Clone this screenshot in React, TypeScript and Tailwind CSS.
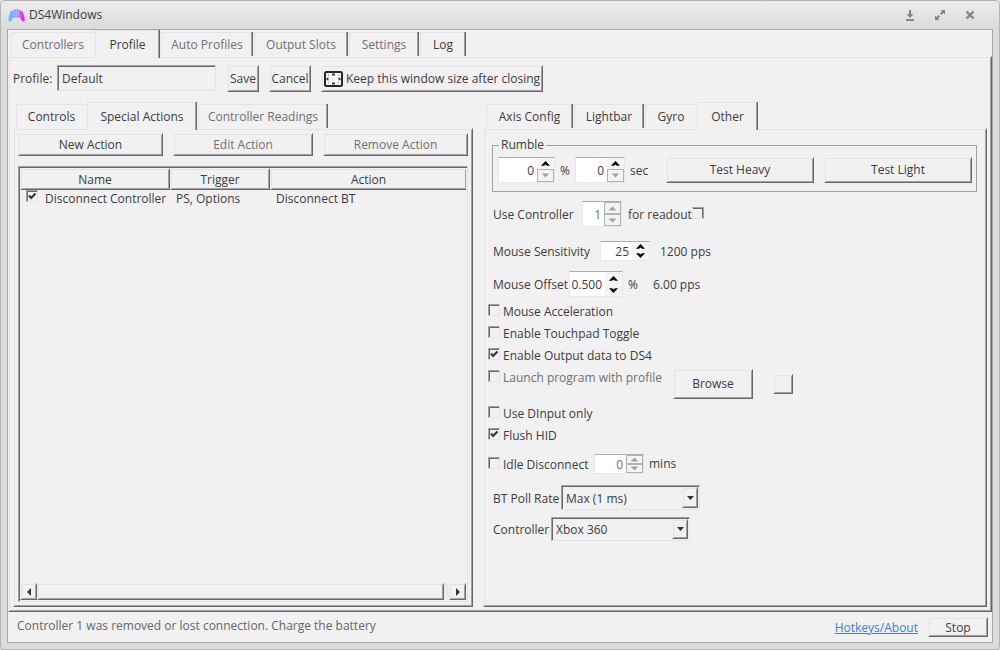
import { useState } from 'react';
import type { ButtonHTMLAttributes, ReactNode } from 'react';
import { clsx } from 'clsx';

const raised =
  'border border-t-[#f1f1f1] border-l-[#f1f1f1] border-r-[#696969] border-b-[#696969] shadow-[inset_1px_1px_0_#e3e3e3,inset_-1px_-1px_0_#a0a0a0]';
const sunken =
  'border border-t-[#a0a0a0] border-l-[#a0a0a0] border-r-[#e3e3e3] border-b-[#e3e3e3] shadow-[inset_1px_1px_0_#696969]';

function PadLogo() {
  return (
    <svg width="17" height="13" viewBox="0 0 17 13" className="shrink-0" aria-hidden="true">
      <defs>
        <linearGradient id="pad" x1="0" x2="1" y1="0" y2="0">
          <stop offset="0" stopColor="#55c8ff" />
          <stop offset="0.35" stopColor="#86a6fa" />
          <stop offset="0.65" stopColor="#a878f2" />
          <stop offset="0.85" stopColor="#ee2ff5" />
          <stop offset="1" stopColor="#ff0af5" />
        </linearGradient>
      </defs>
      <path
        d="M2.500 2.500C3 1.500 4.500 1.500 5.500 1.500L6 .5h5l.5 1c1 0 2.500 0 3 1L16 6.500l.7 4c.2 2-2.200 2.500-3.200 1.200L12 8.500H5L3.500 11.700C2.500 13 .1 12.500.3 10.500l.7-4z"
        fill="url(#pad)"
      />
      <path d="M6.500 1v7M8.500 1v7M10.500 1v7M5.500 3.500h6M5.500 6h6" stroke="#b4c2fb" strokeWidth="0.600" fill="none" />
    </svg>
  );
}

function ResizeIcon() {
  return (
    <svg width="19" height="16" viewBox="0 0 19 16" className="shrink-0" aria-hidden="true">
      <rect x="1" y="1" width="17" height="14" rx="1.500" fill="#f6f6f6" stroke="#262626" strokeWidth="2" />
      <path
        d="M8 4.500h3v-2H8zM8 11.500h3v2H8zM4.500 6.500v3L2.500 9V7zM14.500 6.500v3l2-.5V7z"
        fill="#3c3c3c"
      />
      <path d="M4 4h1v1H4zM14 4h1v1h-1zM4 11h1v1H4zM14 11h1v1h-1z" fill="#8a8a8a" />
    </svg>
  );
}

type ButtonProps = ButtonHTMLAttributes<HTMLButtonElement>;

function Button({ className, children, ...rest }: ButtonProps) {
  return (
    <button type="button" className={clsx(raised, 'whitespace-nowrap disabled:text-[#707070]', className)} {...rest}>
      {children}
    </button>
  );
}

// openEnd marks the tab whose right edge is hidden by the selected one
type TabItem = { label: string; width: string; muted?: boolean; openEnd?: boolean };

function Tabs({ items, active, onChange, className }: {
  items: TabItem[];
  active: string;
  onChange: (label: string) => void;
  className?: string;
}) {
  return (
    <div role="tablist" className={clsx('flex h-[26px] items-start', className)}>
      {items.map((item) => {
        const on = item.label === active;
        return (
          <button
            key={item.label}
            type="button"
            role="tab"
            aria-selected={on}
            onClick={() => onChange(item.label)}
            className={clsx(
              'shrink-0 whitespace-nowrap pt-[2px] pl-[2px]',
              on && 'relative h-7 bg-[#f1f1f1]',
              !on && 'mt-[2px] h-[24px]',
              item.openEnd && !on
                ? 'shadow-[inset_1px_0_0_#f1f1f1,inset_2px_1px_0_#e3e3e3]'
                : 'border-r border-r-[#696969] shadow-[inset_-1px_0_0_#a0a0a0,inset_1px_0_0_#f1f1f1,inset_2px_1px_0_#e3e3e3]',
              item.muted && !on && 'text-[#707070]',
              item.width,
            )}
          >
            {item.label}
          </button>
        );
      })}
    </div>
  );
}

function CheckBox({ id, defaultChecked, disabled, mirrored, label }: {
  id: string;
  defaultChecked?: boolean;
  disabled?: boolean;
  mirrored?: boolean;
  label?: string;
}) {
  return (
    <span className="relative block size-3 shrink-0">
      <input
        id={id}
        type="checkbox"
        aria-label={label}
        defaultChecked={defaultChecked}
        disabled={disabled}
        className={clsx('peer block size-3 appearance-none', sunken, mirrored && '-scale-x-100')}
      />
      <svg
        className="pointer-events-none absolute inset-0 hidden peer-checked:block"
        width="12"
        height="12"
        viewBox="0 0 12 12"
        aria-hidden="true"
      >
        <path d="M3 5.500 5.200 8 9.500 3.500" fill="none" stroke="#333" strokeWidth="2" />
      </svg>
    </span>
  );
}

function CheckRow({ id, children, defaultChecked, disabled, className }: {
  id: string;
  children: ReactNode;
  defaultChecked?: boolean;
  disabled?: boolean;
  className?: string;
}) {
  return (
    <div className={clsx('flex h-[22px] items-start gap-[3px] pt-[3px]', className)}>
      <CheckBox id={id} defaultChecked={defaultChecked} disabled={disabled} />
      <label htmlFor={id} className={clsx('whitespace-nowrap', disabled && 'text-[#707070]')}>
        {children}
      </label>
    </div>
  );
}

function SpinButton({ up, disabled, onClick }: { up?: boolean; disabled?: boolean; onClick: () => void }) {
  return (
    <button
      type="button"
      aria-label={up ? 'Increase' : 'Decrease'}
      disabled={disabled}
      onClick={onClick}
      className="flex min-h-0 flex-1 items-center justify-center bg-[#f4f4f4] disabled:border disabled:border-[#adb2b5]"
    >
      <svg width="9" height="5" viewBox="0 0 9 5" className={up ? '' : 'rotate-180'} aria-hidden="true">
        {disabled ? (
          <path d="M0.500 4.500 4.500 0.500l4 4z" fill="#a3a3a3" />
        ) : (
          <path d="M0 4.800 4.500 0 9 4.800H6L4.500 3.500 3 4.800z" fill="#000" />
        )}
      </svg>
    </button>
  );
}

function Spinner({ id, label, value, step = 1, digits = 0, disabled, downDisabled, className }: {
  id: string;
  label?: string;
  value: number;
  step?: number;
  digits?: number;
  disabled?: boolean;
  downDisabled?: boolean;
  className?: string;
}) {
  const [text, setText] = useState(value.toFixed(digits));
  const bump = (by: number) => setText(Math.max(0, Number(text) + by).toFixed(digits));

  return (
    <span
      className={clsx(
        'flex shrink-0 border border-[#e3e9ef] border-t-[#abadb3] bg-white',
        className,
      )}
    >
      <input
        id={id}
        aria-label={label}
        inputMode="decimal"
        value={text}
        disabled={disabled}
        onChange={(e) => setText(e.target.value)}
        className="w-0 min-w-0 flex-1 bg-white pt-[1px] pr-[3px] text-right outline-none disabled:text-[#707070]"
      />
      <span className="flex w-[17px] flex-col">
        <SpinButton up disabled={disabled} onClick={() => bump(step)} />
        <SpinButton disabled={disabled || (downDisabled && Number(text) <= 0)} onClick={() => bump(-step)} />
      </span>
    </span>
  );
}

function Select({ id, options, className }: { id: string; options: string[]; className?: string }) {
  return (
    <span className={clsx('relative block shrink-0 leading-4', className)}>
      <select id={id} className={clsx('size-full appearance-none pt-[2px] pl-1 outline-none', sunken)}>
        {options.map((o) => (
          <option key={o}>{o}</option>
        ))}
      </select>
      <span
        className={clsx(
          'pointer-events-none absolute inset-y-[2px] right-[2px] flex w-4 items-center justify-center bg-[#f1f1f1]',
          raised,
        )}
      >
        <svg width="7" height="4" viewBox="0 0 7 4" aria-hidden="true">
          <path d="M0 0h7L3.500 4z" fill="#333" />
        </svg>
      </span>
    </span>
  );
}

function TitleBar() {
  return (
    <header className="flex h-7 shrink-0 items-center justify-between pl-[1px] pr-[17px]">
      <div className="flex items-center gap-1">
        <PadLogo />
        <h1>DS4Windows</h1>
      </div>
      <div className="flex items-center gap-[19px] text-[#858585]">
        <button type="button" aria-label="Minimize">
          <svg width="11" height="11" viewBox="0 0 11 11" fill="currentColor" aria-hidden="true">
            <path d="M4 0h2v4h2.500L5 8 1.500 4H4zM1 9h8v2H1z" />
          </svg>
        </button>
        <button type="button" aria-label="Maximize">
          <svg width="11" height="11" viewBox="0 0 11 11" fill="currentColor" aria-hidden="true">
            <path d="M5.500 0H10v4.500L8.500 3 6.500 5 5 3.500l2-2zM0 5.500 1.500 7l2-2L5 6.500l-2 2L4.500 10H0z" />
          </svg>
        </button>
        <button type="button" aria-label="Close">
          <svg width="11" height="11" viewBox="0 0 11 11" aria-hidden="true">
            <path d="m1.500 1.500 7 7M8.500 1.500l-7 7" stroke="currentColor" strokeWidth="2.400" />
          </svg>
        </button>
      </div>
    </header>
  );
}

const mainTabs: TabItem[] = [
  { label: 'Controllers', width: 'w-[84px]', muted: true, openEnd: true },
  { label: 'Profile', width: 'w-[66px]' },
  { label: 'Auto Profiles', width: 'w-[93px]', muted: true },
  { label: 'Output Slots', width: 'w-[95px]', muted: true },
  { label: 'Settings', width: 'w-[71px]', muted: true },
  { label: 'Log', width: 'w-[47px]' },
];

const actionTabs: TabItem[] = [
  { label: 'Controls', width: 'w-[71px]', openEnd: true },
  { label: 'Special Actions', width: 'w-[111px]' },
  { label: 'Controller Readings', width: 'w-[131px]', muted: true },
];

const optionTabs: TabItem[] = [
  { label: 'Axis Config', width: 'w-[88px]' },
  { label: 'Lightbar', width: 'w-[71px]' },
  { label: 'Gyro', width: 'w-[52px]', openEnd: true },
  { label: 'Other', width: 'w-[62px]' },
];

const actions = [{ name: 'Disconnect Controller', trigger: 'PS, Options', action: 'Disconnect BT' }];

function ActionList() {
  return (
    <div className={clsx('mt-[10px] flex flex-1 flex-col p-[1px]', sunken)}>
      <table className="w-full table-fixed border-separate border-spacing-0">
        <thead>
          <tr className="h-[22px]">
            <th className={clsx('w-[150px] pt-[2px] font-normal', raised)}>Name</th>
            <th className={clsx('w-[100px] pt-[2px] font-normal', raised)}>Trigger</th>
            <th className={clsx('border-r-0 pt-[2px] font-normal', raised)}>Action</th>
          </tr>
        </thead>
        <tbody>
          {actions.map((row) => (
            <tr key={row.name}>
              <td className="pl-[6px]">
                <div className="flex gap-[7px]">
                  <CheckBox id="action-0" defaultChecked />
                  <label htmlFor="action-0" className="whitespace-nowrap pt-[1px]">{row.name}</label>
                </div>
              </td>
              <td className="pl-[6px] pt-[1px]">{row.trigger}</td>
              <td className="pl-[6px] pt-[1px]">{row.action}</td>
            </tr>
          ))}
        </tbody>
      </table>
      <div className="mt-auto flex h-[17px] bg-[#eaeaea]">
        <button type="button" aria-label="Scroll left" className={clsx('flex w-[17px] items-center justify-center bg-[#f1f1f1]', raised)}>
          <svg width="4" height="8" viewBox="0 0 4 8" aria-hidden="true">
            <path d="M4 0v8L0 4z" fill="#333" />
          </svg>
        </button>
        <div className={clsx('mr-[5px] flex-1 bg-[#f1f1f1]', raised)} />
        <button type="button" aria-label="Scroll right" className={clsx('flex w-[17px] items-center justify-center bg-[#f1f1f1]', raised)}>
          <svg width="4" height="8" viewBox="0 0 4 8" aria-hidden="true">
            <path d="M0 0v8l4-4z" fill="#333" />
          </svg>
        </button>
      </div>
    </div>
  );
}

function SpecialActions() {
  const [tab, setTab] = useState('Special Actions');
  return (
    <section className="flex flex-col">
      <Tabs items={actionTabs} active={tab} onChange={setTab} className="pl-[2px]" />
      <div className={clsx('flex flex-1 flex-col p-1', raised)}>
        <div className="grid grid-cols-[145fr_140fr_145fr] gap-[10px]">
          <Button className="h-[23px]">New Action</Button>
          <Button className="h-[23px]" disabled>Edit Action</Button>
          <Button className="h-[23px]" disabled>Remove Action</Button>
        </div>
        <ActionList />
      </div>
    </section>
  );
}

function OtherOptions() {
  const [tab, setTab] = useState('Other');
  return (
    <section className="flex flex-col">
      <Tabs items={optionTabs} active={tab} onChange={setTab} className="pl-[2px]" />
      <div className={clsx('flex-1 pt-2 pb-4', raised)}>
        <fieldset className="ml-2 mr-[9px] border border-[#a0a0a0] pt-1 pb-2 pl-[5px] pr-1">
          <legend className="ml-[1px] px-[2px]">Rumble</legend>
          <div className="flex h-[26px] items-stretch leading-[28px]">
            <Spinner id="rumble-power" label="Rumble strength" value={0} downDisabled className="w-[57px]" />
            <label htmlFor="rumble-power" className="w-5 pl-[5px]">%</label>
            <Spinner id="rumble-time" label="Rumble time" value={0} downDisabled className="w-[50px]" />
            <label htmlFor="rumble-time" className="w-[41px] pl-[5px]">sec</label>
            <div className="grid flex-1 grid-cols-2 gap-[10px] leading-4">
              <Button>Test Heavy</Button>
              <Button>Test Light</Button>
            </div>
          </div>
        </fieldset>

        {/* Readout and mouse */}
        <div className="mt-[9px] flex h-[26px] pl-[9px] leading-[28px]">
          <label htmlFor="readout-pad" className="w-[89px] whitespace-nowrap">Use Controller</label>
          <Spinner id="readout-pad" value={1} disabled className="w-[40px]" />
          <label htmlFor="readout" className="w-[70px] whitespace-nowrap pl-[6px]">for readout</label>
          <div className="pt-[6px]">
            <CheckBox id="readout" mirrored />
          </div>
        </div>
        <div className="mt-[14px] flex h-5 pl-[9px] leading-[22px]">
          <label htmlFor="mouse-sens" className="w-[107px] whitespace-nowrap">Mouse Sensitivity</label>
          <Spinner id="mouse-sens" value={25} className="w-[50px]" />
          <span className="pl-[10px]">1200 pps</span>
        </div>
        <div className="mt-[10px] flex h-[26px] pl-[9px] leading-[28px]">
          <label htmlFor="mouse-offset" className="w-[76px] whitespace-nowrap">Mouse Offset</label>
          <Spinner id="mouse-offset" value={0.5} step={0.001} digits={3} className="w-[54px]" />
          <span className="w-[30px] pl-[5px]">%</span>
          <span>6.00 pps</span>
        </div>

        <div className="mt-1 pl-1">
          <CheckRow id="mouse-accel">Mouse Acceleration</CheckRow>
          <CheckRow id="touch-toggle">Enable Touchpad Toggle</CheckRow>
          <CheckRow id="output-data" defaultChecked>Enable Output data to DS4</CheckRow>
          <div className="flex h-8 items-start">
            <CheckRow id="launch" disabled className="w-[185px]">Launch program with profile</CheckRow>
            <Button className="mt-[2px] h-[30px] w-20">Browse</Button>
            <Button className="mt-[7px] ml-5 size-5" aria-label="Clear program" />
          </div>
          <CheckRow id="dinput" className="mt-1">Use DInput only</CheckRow>
          <CheckRow id="flush" defaultChecked>Flush HID</CheckRow>
          <div className="mt-[7px] flex h-[22px] items-start">
            <CheckRow id="idle" className="w-[106px]">Idle Disconnect</CheckRow>
            <Spinner id="idle-mins" label="Idle minutes" value={0} disabled className="h-5 w-[50px]" />
            <label htmlFor="idle-mins" className="pl-[5px] leading-5">mins</label>
          </div>
        </div>

        <div className="mt-[9px] flex h-[25px] pl-[9px] leading-[28px]">
          <label htmlFor="poll" className="w-[68px] whitespace-nowrap">BT Poll Rate</label>
          <Select id="poll" options={['Max (1 ms)', '2 ms', '4 ms', '8 ms', '16 ms']} className="w-[139px]" />
        </div>
        <div className="mt-[7px] flex h-[24px] pl-[9px] leading-[26px]">
          <label htmlFor="pad-type" className="w-[58px] whitespace-nowrap">Controller</label>
          <Select id="pad-type" options={['Xbox 360', 'DualShock 4']} className="w-[139px]" />
        </div>
      </div>
    </section>
  );
}

export default function App() {
  const [tab, setTab] = useState('Profile');
  const [profile, setProfile] = useState('Default');

  return (
    <div className="bg-[#e4e4e4] font-['Open_Sans','Noto_Sans',sans-serif] text-[12px] leading-4 text-[#3c3c3c]">
      <div className="flex min-h-screen flex-col rounded-t-[5px] rounded-b-[3px] border border-[#b4b4b4] bg-[#dcdcdc] bg-[linear-gradient(#ededed,#dcdcdc_26px)] px-[6px] pb-[6px]">
        <TitleBar />
        <div className="flex flex-1 flex-col border border-[#aaaaaa] bg-[#f1f1f1]">
          <Tabs items={mainTabs} active={tab} onChange={setTab} className="pl-[2px]" />
          <main className={clsx('flex flex-1 flex-col px-1 pt-2 pb-1', raised)}>
            <div className="flex h-[27px] items-stretch">
              <label htmlFor="profile" className="w-[44px] leading-[27px]">Profile:</label>
              <input
                id="profile"
                value={profile}
                onChange={(e) => setProfile(e.target.value)}
                className={clsx('h-[26px] w-[159px] pl-1 outline-none', sunken)}
              />
              <Button className="ml-[11px] w-[32px]">Save</Button>
              <Button className="ml-[10px] w-[42px]">Cancel</Button>
              <Button className="ml-[10px] flex items-center gap-[3px] pr-[2px] pl-[2px]">
                <ResizeIcon />
                Keep this window size after closing
              </Button>
            </div>
            <div className="mt-[10px] grid flex-1 grid-cols-[460fr_504fr] gap-[10px]">
              <SpecialActions />
              <OtherOptions />
            </div>
          </main>
          <footer className="flex h-[30px] items-start justify-between pl-[9px] pr-1 pt-[5px]">
            <span className="pt-[1px] text-[#666666]">Controller 1 was removed or lost connection. Charge the battery</span>
            <div className="flex items-start gap-[10px]">
              <a href="#about" className="pt-[3px] text-[#3a7fdc] underline">Hotkeys/About</a>
              <Button className="h-5 w-[60px] pt-[2px]">Stop</Button>
            </div>
          </footer>
        </div>
      </div>
    </div>
  );
}
